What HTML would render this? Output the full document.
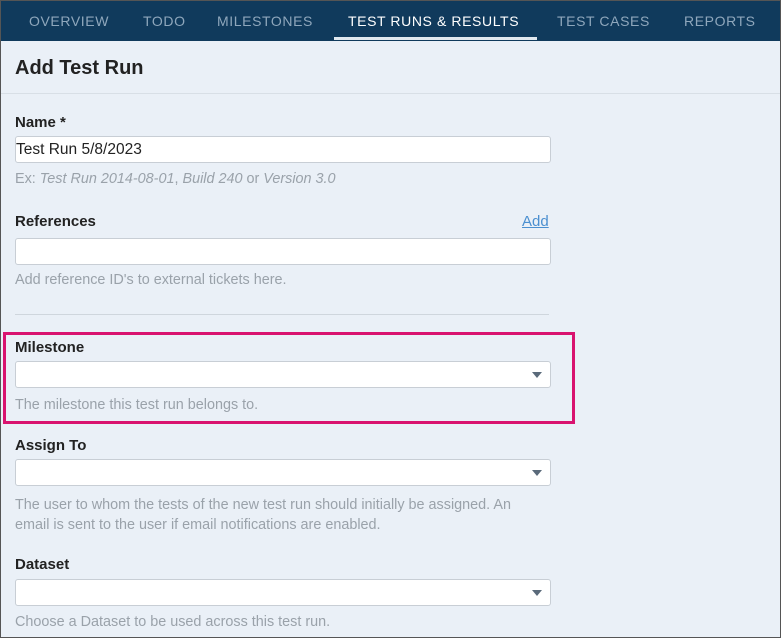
<!DOCTYPE html><html><head><style>
body{margin:0;width:781px;height:638px;overflow:hidden;font-family:"Liberation Sans",sans-serif;}
.wrap{position:absolute;left:0;top:0;width:779px;height:636px;border:1px solid #555;background:#eaf0f7;overflow:hidden}
.nav{position:absolute;left:0;top:0;width:779px;height:40px;background:#103a5c}
.nav span{position:absolute;top:12px;font-size:14px;letter-spacing:0.6px;color:#8fa7bc;white-space:nowrap}
.nav .act{color:#fff}
.ul{position:absolute;left:333px;top:36px;width:203px;height:3px;background:#e0e8ef}
.a{position:absolute;white-space:nowrap}
.lab{font-size:15px;font-weight:bold;color:#222;left:14px}
.hint{font-size:14.4px;color:#9aa2aa;left:14px}
.in{position:absolute;left:14px;width:534px;height:25px;background:#fff;border:1px solid #c8ced5;border-radius:3px}
.sel::after{content:"";position:absolute;right:8px;top:10px;border-left:5px solid transparent;border-right:5px solid transparent;border-top:6px solid #5a6a7a}
</style></head><body><div class="wrap">
<div class="nav">
<span style="left:28px">OVERVIEW</span><span style="left:142px">TODO</span><span style="left:216px">MILESTONES</span><span class="act" style="left:347px">TEST RUNS &amp; RESULTS</span><span style="left:556px">TEST CASES</span><span style="left:683px">REPORTS</span>
<div class="ul"></div></div>
<div class="a" style="left:14px;top:56px;font-size:20px;font-weight:bold;color:#222">Add Test Run</div>
<div style="position:absolute;left:0;top:92px;width:779px;height:1px;background:#d8dfe6"></div>
<div class="a lab" style="top:113px">Name *</div>
<div class="in" style="top:135px;font-size:15.5px;color:#222;line-height:25px;box-sizing:border-box;width:536px;height:27px;padding-left:0">Test Run 5/8/2023</div>
<div class="a hint" style="top:170px">Ex: <i>Test Run 2014-08-01</i>, <i>Build 240</i> or <i>Version 3.0</i></div>
<div class="a lab" style="top:212px">References</div>
<div class="a" style="left:521px;top:212px;font-size:15px;color:#4a8fd0;text-decoration:underline">Add</div>
<div class="in" style="top:237px"></div>
<div class="a hint" style="top:271px">Add reference ID's to external tickets here.</div>
<div style="position:absolute;left:14px;top:313px;width:534px;height:1px;background:#cfd6dd"></div>
<div style="position:absolute;left:2px;top:331px;width:566px;height:86px;border:3px solid #d9136f"></div>
<div class="a lab" style="top:338px">Milestone</div>
<div class="in sel" style="top:360px"></div>
<div class="a hint" style="top:396px">The milestone this test run belongs to.</div>
<div class="a lab" style="top:436px">Assign To</div>
<div class="in sel" style="top:458px"></div>
<div class="a hint" style="top:494px;line-height:20px">The user to whom the tests of the new test run should initially be assigned. An<br>email is sent to the user if email notifications are enabled.</div>
<div class="a lab" style="top:555px">Dataset</div>
<div class="in sel" style="top:578px"></div>
<div class="a hint" style="top:613px">Choose a Dataset to be used across this test run.</div>
</div></body></html>
